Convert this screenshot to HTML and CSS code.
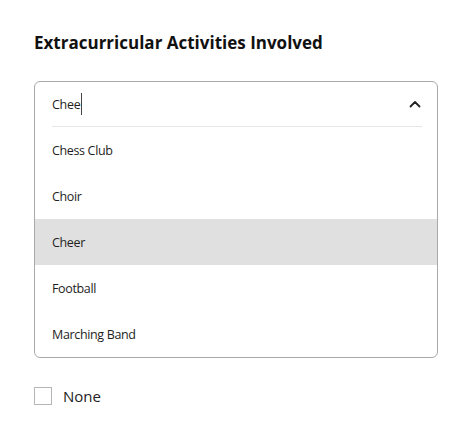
FILE: index.html
```html
<!DOCTYPE html>
<html>
<head>
<meta charset="utf-8">
<link rel="stylesheet" href="styles.css">
</head>
<body>
<div class="page">
  <h2 class="title">Extracurricular Activities Involved</h2>
  <div class="combo">
    <div class="input-row">
      <span class="input-text">Chee</span><span class="caret"></span>
      <svg class="chevron" width="12" height="8" viewBox="0 0 12 8"><path d="M1.5 6.5 L6 2 L10.5 6.5" fill="none" stroke="#222" stroke-width="1.8" stroke-linecap="round" stroke-linejoin="round"/></svg>
    </div>
    <ul class="options">
      <li class="option">Chess Club</li>
      <li class="option">Choir</li>
      <li class="option active">Cheer</li>
      <li class="option">Football</li>
      <li class="option">Marching Band</li>
    </ul>
  </div>
  <label class="check">
    <span class="box"></span>
    <span class="check-label">None</span>
  </label>
</div>
</body>
</html>
```
FILE: styles.css
```css
html, body {
  margin: 0;
  padding: 0;
  background: #fff;
}
body {
  font-family: "Open Sans", "Noto Sans", sans-serif;
  color: #1a1a1a;
}
.page {
  padding: 31px 36px 0 34px;
}
.title {
  margin: 0;
  font-size: 17px;
  font-weight: 700;
  line-height: 24px;
  color: #111;
}
.combo {
  margin-top: 26px;
  width: 402px;
  border: 1px solid #a9a9a9;
  border-radius: 6px;
  overflow: hidden;
}
.input-row {
  display: flex;
  align-items: center;
  height: 44px;
  margin: 0 15px 0 17px;
  border-bottom: 1px solid #e6e6e6;
  font-size: 12.5px;
  letter-spacing: -0.3px;
}
.input-text {
  color: #1e1e1e;
}
.caret {
  display: inline-block;
  width: 1px;
  height: 22px;
  background: #444;
  margin-left: 1px;
}
.chevron {
  margin-left: auto;
  margin-right: 1px;
}
.options {
  list-style: none;
  margin: 0;
  padding: 0;
}
.option {
  height: 46px;
  line-height: 48px;
  box-sizing: border-box;
  padding-left: 17px;
  font-size: 12.5px;
  letter-spacing: -0.35px;
  color: #1e1e1e;
}
.option.active {
  background: #e0e0e0;
}
.check {
  display: flex;
  align-items: center;
  margin-top: 28px;
}
.box {
  width: 16px;
  height: 16px;
  border: 1px solid #b5b5b5;
  background: #fff;
}
.check-label {
  margin-left: 11px;
  font-size: 15px;
  color: #222;
}
```
